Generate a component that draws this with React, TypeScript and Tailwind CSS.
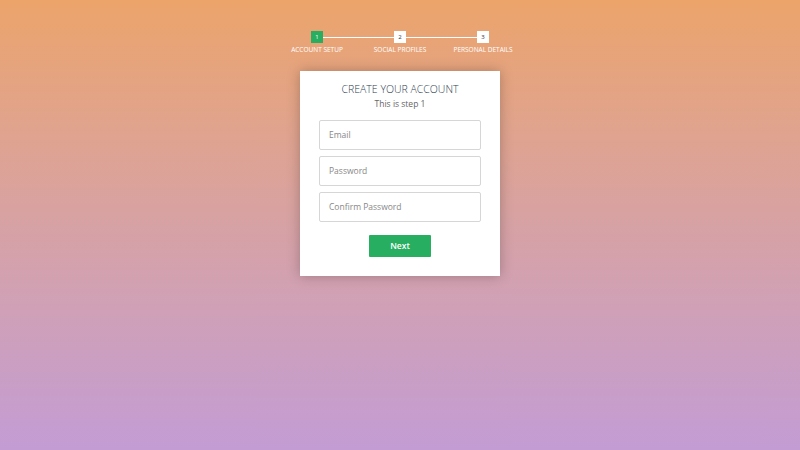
import React from "react";

const steps = ["Account Setup", "Social Profiles", "Personal Details"];

function Progress() {
  return (
    <div className="relative flex justify-center pt-[31px]">
      <div className="absolute left-[317px] right-[317px] top-[37px] h-px bg-white" />
      {steps.map((s, i) => (
        <div key={s} className="relative flex w-[83px] flex-col items-center">
          <div
            className={
              i === 0
                ? "flex h-[12px] w-[12px] items-center justify-center bg-[#27ae60] text-[6px] text-white"
                : "flex h-[12px] w-[12px] items-center justify-center bg-white text-[6px] text-[#333]"
            }
          >
            {i + 1}
          </div>
          <div className="mt-[3px] whitespace-nowrap text-[6.5px] uppercase leading-[8px] text-white">{s}</div>
        </div>
      ))}
    </div>
  );
}

export default function App() {
  return (
    <div
      className="h-[450px] w-[800px] overflow-hidden bg-linear-to-b from-[#eca46a] to-[#c39cd4]"
      style={{ fontFamily: '"Open Sans", "Liberation Sans", sans-serif' }}
    >
      <Progress />
      <div className="mx-auto mt-[17px] flex w-[200px] flex-col items-center bg-white px-[19px] pb-[19px] pt-[11px] shadow-[0_0_12px_rgba(0,0,0,0.25)]">
        <h2 className="text-[10.5px] font-light leading-[14px] uppercase text-[#2c3e50]">Create your account</h2>
        <p className="mt-[2px] text-[8.5px] leading-[12px] text-[#666]">This is step 1</p>
        <div className="mt-[10px] flex w-full flex-col gap-[6px]">
          {["Email", "Password", "Confirm Password"].map((p) => (
            <div
              key={p}
              className="flex h-[30px] items-center rounded-[2px] border border-[#d6d6d6] px-[9px] text-[8.5px] text-[#888]"
            >
              {p}
            </div>
          ))}
        </div>
        <button className="mt-[13px] h-[22px] w-[62px] rounded-[1px] bg-[#27ae60] text-[8.5px] font-semibold text-white">
          Next
        </button>
      </div>
    </div>
  );
}
